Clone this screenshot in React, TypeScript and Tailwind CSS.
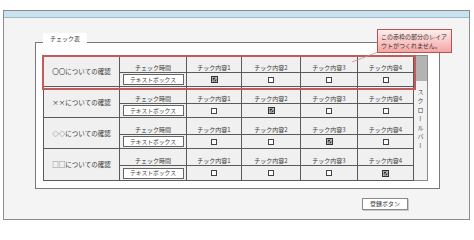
import React from 'react'

const rows = [
  { label: '〇〇についての確認', checked: 0 },
  { label: '××についての確認', checked: 1 },
  { label: '◇◇についての確認', checked: 2 },
  { label: '□□についての確認', checked: 3 },
]

const items = ['チック内容1', 'チック内容2', 'チック内容3', 'チック内容4']
const itemWidths = ['w-[55px]', 'w-[59px]', 'w-[57px]', 'flex-1']

const CheckBox: React.FC<{ on: boolean }> = ({ on }) =>
  on ? (
    <svg width="7" height="7" viewBox="0 0 7 7">
      <rect x="0.5" y="0.5" width="6" height="6" fill="#fff" stroke="#333" />
      <rect x="1.5" y="1.5" width="4" height="4" fill="#333" />
      <path d="M2 3.6 L3 4.6 L5.2 2" stroke="#fff" strokeWidth="0.9" fill="none" />
    </svg>
  ) : (
    <span className="block w-[6px] h-[6px] border border-[#444] bg-white" />
  )

const App: React.FC = () => {
  return (
    <div
      className="relative w-[474px] h-[224px] bg-white overflow-hidden text-[#3a3a3a]"
      style={{ fontFamily: '"Noto Sans CJK JP", "Noto Sans", sans-serif' }}
    >
      {/* window */}
      <div className="ml-[3px] mt-[10px] w-[467px] h-[210px] border border-[#8c8c8c] bg-[#f4f4f4] flex flex-col">
        <div className="h-[7px] bg-[#c8e3ef] border-b border-[#9fb9c6]" />

        <div className="relative ml-[31px] mt-[24px] w-[405px] h-[147px] border border-[#7a7a7a] bg-white">
          <div className="absolute left-[7px] -top-[10px] w-[44px] h-[12px] bg-white flex items-center justify-center text-[6px] leading-none">
            チェック表
          </div>

          <div className="ml-[7px] mt-[12px] flex">
            {/* table */}
            <div className="w-[371px] border border-[#5a5a5a] bg-[#f0f0f0]">
              {rows.map((r, i) => (
                <div key={i} className={`flex h-[31px] ${i < 3 ? 'border-b border-[#5a5a5a]' : ''}`}>
                  <div className="w-[76px] border-r border-[#5a5a5a] flex items-center justify-center text-[6.5px] leading-none">
                    {r.label}
                  </div>
                  <div className="w-[67px] border-r border-[#5a5a5a] flex flex-col">
                    <div className="h-[17px] border-b border-[#5a5a5a] flex items-end justify-center pb-[1px] text-[6px] leading-none">
                      チェック時間
                    </div>
                    <div className="flex-1 flex items-center justify-center">
                      <div className="w-[61px] h-[11px] border border-[#666] bg-white flex items-center justify-center text-[5.8px] leading-none">
                        テキストボックス
                      </div>
                    </div>
                  </div>
                  {items.map((t, j) => (
                    <div
                      key={j}
                      className={`${itemWidths[j]} ${j < 3 ? 'border-r border-[#5a5a5a]' : ''} flex flex-col`}
                    >
                      <div className="h-[17px] border-b border-[#5a5a5a] flex items-end justify-center pb-[1px] text-[6px] leading-none">
                        {t}
                      </div>
                      <div className="flex-1 flex items-center justify-center">
                        <CheckBox on={r.checked === j} />
                      </div>
                    </div>
                  ))}
                </div>
              ))}
            </div>

            {/* scrollbar */}
            <div className="w-[14px] border border-l-0 border-[#8a8a8a] bg-[#f2f2f2] flex flex-col items-center">
              <div className="w-full h-[25px] bg-[#b3b3b3]" />
              <div className="mt-[6px] flex flex-col items-center text-[6px] leading-[9px] text-[#444]">
                {'スクロールバー'.split('').map((c, k) => (
                  <span key={k} className={c === 'ー' ? 'block h-[9px] rotate-90' : 'block h-[9px]'}>
                    {c}
                  </span>
                ))}
              </div>
            </div>
          </div>
        </div>

        <div className="flex justify-end pr-[61px] mt-[9px]">
          <button className="w-[46px] h-[12px] border border-[#8a8a8a] bg-white shadow-[1px_1px_0_#c8c8c8] flex items-center justify-center text-[6px] leading-none text-[#333]">
            登録ボタン
          </button>
        </div>
      </div>

      {/* red frame over row 1 */}
      <div className="absolute left-[42px] top-[55px] w-[374px] h-[35px] border-2 border-[#c55a5a]" />

      {/* callout */}
      <svg className="absolute left-0 top-0" width="474" height="224">
        <line x1="378" y1="52" x2="352" y2="62" stroke="#d08a8a" strokeWidth="0.8" />
      </svg>
      <div className="absolute left-[377px] top-[29px] w-[75px] h-[24px] border border-[#c0504d] bg-gradient-to-b from-[#fdeeee] to-[#f4a4a4] px-[3px] pt-[3px] text-[6px] leading-[8.5px] text-[#333] whitespace-nowrap">
        この赤枠の部分のレイア
        <br />
        ウトがつくれません。
      </div>
    </div>
  )
}

export default App
